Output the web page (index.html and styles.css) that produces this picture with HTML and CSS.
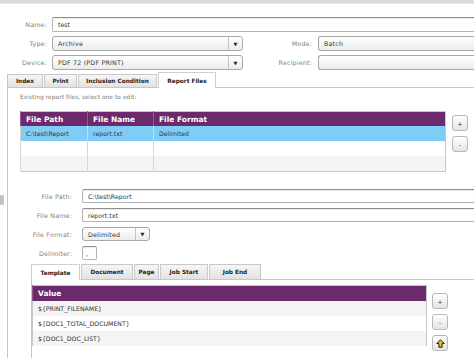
FILE: index.html
```html
<!DOCTYPE html>
<html lang="en">
<head>
    <meta charset="UTF-8">
    <title>Report Files</title>
    <link rel="stylesheet" href="styles.css">
</head>
<body>

    <div class="topbar"></div>

    <div class="fields">
        <div class="row">
            <label class="lbl">Name:</label>
            <div class="input wide">test</div>
        </div>
        <div class="row">
            <label class="lbl">Type:</label>
            <div class="select type"><span>Archive</span><i class="arrow">&#9660;</i></div>
            <label class="lbl side">Mode:</label>
            <div class="select wide"><span>Batch</span></div>
        </div>
        <div class="row">
            <label class="lbl">Device:</label>
            <div class="select type"><span>PDF 72 (PDF PRINT)</span><i class="arrow">&#9660;</i></div>
            <label class="lbl side">Recipient:</label>
            <div class="select wide"><span></span></div>
        </div>
    </div>

    <div class="tabs outer-tabs">
        <div class="tab" style="width:36px">Index</div>
        <div class="tab" style="width:33px">Print</div>
        <div class="tab" style="width:79px">Inclusion Condition</div>
        <div class="tab active" style="width:58px">Report Files</div>
    </div>

    <div class="main">
        <div class="gutter"><div class="handle"></div></div>

        <div class="panel">
            <p class="hint">Existing report files, select one to edit:</p>

            <div class="grid-wrap">
                <table class="grid files">
                    <thead>
                        <tr><th class="c1">File Path</th><th class="c2">File Name</th><th>File Format</th></tr>
                    </thead>
                    <tbody>
                        <tr class="selected"><td>C:\test\Report</td><td>report.txt</td><td>Delimited</td></tr>
                        <tr><td></td><td></td><td></td></tr>
                        <tr class="alt"><td></td><td></td><td></td></tr>
                    </tbody>
                </table>
                <div class="side-btns first">
                    <button class="btn">+</button>
                    <button class="btn">-</button>
                </div>
            </div>

            <div class="details">
                <div class="row small">
                    <label class="lbl wide-lbl">File Path:</label>
                    <div class="input long">C:\test\Report</div>
                </div>
                <div class="row small">
                    <label class="lbl wide-lbl">File Name:</label>
                    <div class="input long">report.txt</div>
                </div>
                <div class="row small">
                    <label class="lbl wide-lbl">File Format:</label>
                    <div class="select format"><span>Delimited</span><i class="arrow">&#9660;</i></div>
                </div>
                <div class="row small last">
                    <label class="lbl wide-lbl">Delimiter:</label>
                    <div class="input delim">,</div>
                </div>
            </div>

            <div class="tabs inner-tabs">
                <div class="tab active" style="width:49px">Template</div>
                <div class="tab" style="width:52px">Document</div>
                <div class="tab" style="width:25px">Page</div>
                <div class="tab" style="width:48px">Job Start</div>
                <div class="tab" style="width:52px">Job End</div>
            </div>

            <div class="inner-panel">
                <div class="grid-wrap">
                    <table class="grid values">
                        <thead>
                            <tr><th>Value</th></tr>
                        </thead>
                        <tbody>
                            <tr class="alt"><td>${PRINT_FILENAME}</td></tr>
                            <tr><td>${DOC1_TOTAL_DOCUMENT}</td></tr>
                            <tr class="alt"><td>${DOC1_DOC_LIST}</td></tr>
                        </tbody>
                    </table>
                    <div class="side-btns second">
                        <button class="btn">+</button>
                        <button class="btn">-</button>
                        <button class="btn">
                            <svg width="9" height="9" viewBox="0 0 10 10">
                                <path d="M5 0.8 L9.2 5 L6.8 5 L6.8 9.2 L3.2 9.2 L3.2 5 L0.8 5 Z" fill="#e8c020" stroke="#222" stroke-width="1.1" stroke-linejoin="round"/>
                            </svg>
                        </button>
                    </div>
                </div>
            </div>
        </div>
    </div>

</body>
</html>
```

FILE: styles.css
```css
body { margin: 0; width: 474px; height: 358px; overflow: hidden; background: #fff; font-family: "DejaVu Sans", Verdana, sans-serif; font-size: 6px; color: #333; }
.topbar { height: 3px; background: #dcdcdc; border-bottom: 1px solid #e8e8e8; }

.fields { padding-top: 13px; }
.row { display: flex; align-items: center; height: 15px; margin-bottom: 4px; white-space: nowrap; }
.lbl { width: 47px; margin-right: 5px; text-align: right; color: #808080; font-size: 6.3px; letter-spacing: 0.2px; flex: none; }
.lbl.side { width: 69px; margin-right: 6px; }

.input { box-sizing: border-box; height: 100%; border: 1px solid #b4b4b4; border-top-color: #8e8e8e; border-radius: 2px; padding-left: 5px; display: flex; align-items: center; font-size: 6.3px; color: #333; background: #fff; box-shadow: inset 0 1px 1px rgba(0,0,0,0.08); flex: none; }
.input.wide { flex: 1; border-right: none; border-radius: 2px 0 0 2px; }
.input.long { flex: 1; border-right: none; border-radius: 2px 0 0 2px; }
.input.delim { width: 15px; padding-left: 3px; }

.select { box-sizing: border-box; height: 100%; border: 1px solid #a8a8a8; border-radius: 3px; background: linear-gradient(#ffffff, #ececec); display: flex; align-items: center; font-size: 6.3px; color: #333; flex: none; }
.select span { flex: 1; padding-left: 5px; letter-spacing: 0.2px; }
.select .arrow { font-style: normal; width: 13px; height: 100%; border-left: 1px solid #c4c4c4; display: flex; align-items: center; justify-content: center; font-size: 5px; color: #222; }
.select.type { width: 191px; }
.select.wide { flex: 1; border-right: none; border-radius: 3px 0 0 3px; }
.select.format { width: 68px; }

.tabs { display: flex; align-items: flex-end; height: 15px; border-bottom: 1px solid #c8c8c8; }
.outer-tabs { margin-top: -2px; margin-left: 7px; }
.tab { box-sizing: border-box; height: 13px; border: 1px solid #c8c8c8; border-bottom: none; background: linear-gradient(#f6f6f6, #e2e2e2); display: flex; align-items: center; justify-content: center; font-size: 5.8px; font-weight: bold; color: #222; white-space: nowrap; margin-right: 1px; }
.tab.active { height: 16px; margin-bottom: -1px; background: #fff; border-color: #cfcfcf; }

.main { display: flex; }
.gutter { width: 7px; flex: none; }
.handle { width: 4px; height: 10px; margin-top: 107px; background: #c4c4c4; }
.panel { flex: 1; border-left: 1px solid #c8c8c8; padding-left: 12px; height: 270px; overflow: hidden; }
.hint { margin: 5px 0 0; line-height: 9px; color: #777; font-size: 5.8px; letter-spacing: 0.1px; }

.grid-wrap { display: flex; align-items: flex-start; }
.grid { border-collapse: collapse; table-layout: fixed; border: 1px solid #c8c8c8; }
.grid th { background: #6c2a6c; color: #fff; font-size: 7.5px; font-weight: bold; text-align: left; padding: 0 0 0 5px; height: 14px; border-left: 1px solid #8e5a8e; }
.grid td { height: 15px; padding: 0 0 0 5px; border-left: 1px solid #d8d8d8; font-size: 6.2px; color: #333; white-space: nowrap; }
.grid tr.alt td { background: #f4f4f4; }
.grid tr.selected td { background: #7fcdf6; }
.files { width: 426px; margin-top: 9px; }
.files .c1 { width: 61px; }
.files .c2 { width: 60px; }
.values { width: 395px; margin-top: 5px; border-bottom: none; }
.values th { height: 15px; font-size: 7.5px; }
.values td { border-left: none; }

.side-btns { display: flex; flex-direction: column; gap: 5px; }
.side-btns.first { margin-left: 6px; padding-top: 13px; }
.side-btns.second { margin-left: 5px; padding-top: 13px; }
.btn { box-sizing: border-box; width: 16px; height: 16px; padding: 0; border: 1px solid #b8b8b8; border-radius: 3px; background: linear-gradient(#ffffff, #e4e4e4); font-family: "DejaVu Sans", sans-serif; font-size: 6px; color: #333; display: flex; align-items: center; justify-content: center; }

.details { margin-top: 17px; }
.row.small { height: 14px; margin-bottom: 5px; }
.row.small.last { margin-bottom: 4px; }
.lbl.wide-lbl { width: 52px; margin-right: 10px; }

.inner-tabs { margin-left: 11px; }
.inner-tabs .tab { height: 15px; }
.inner-tabs .tab.active { height: 16px; }
.inner-panel { margin-left: 11px; border-left: 1px solid #c8c8c8; height: 80px; }
```
